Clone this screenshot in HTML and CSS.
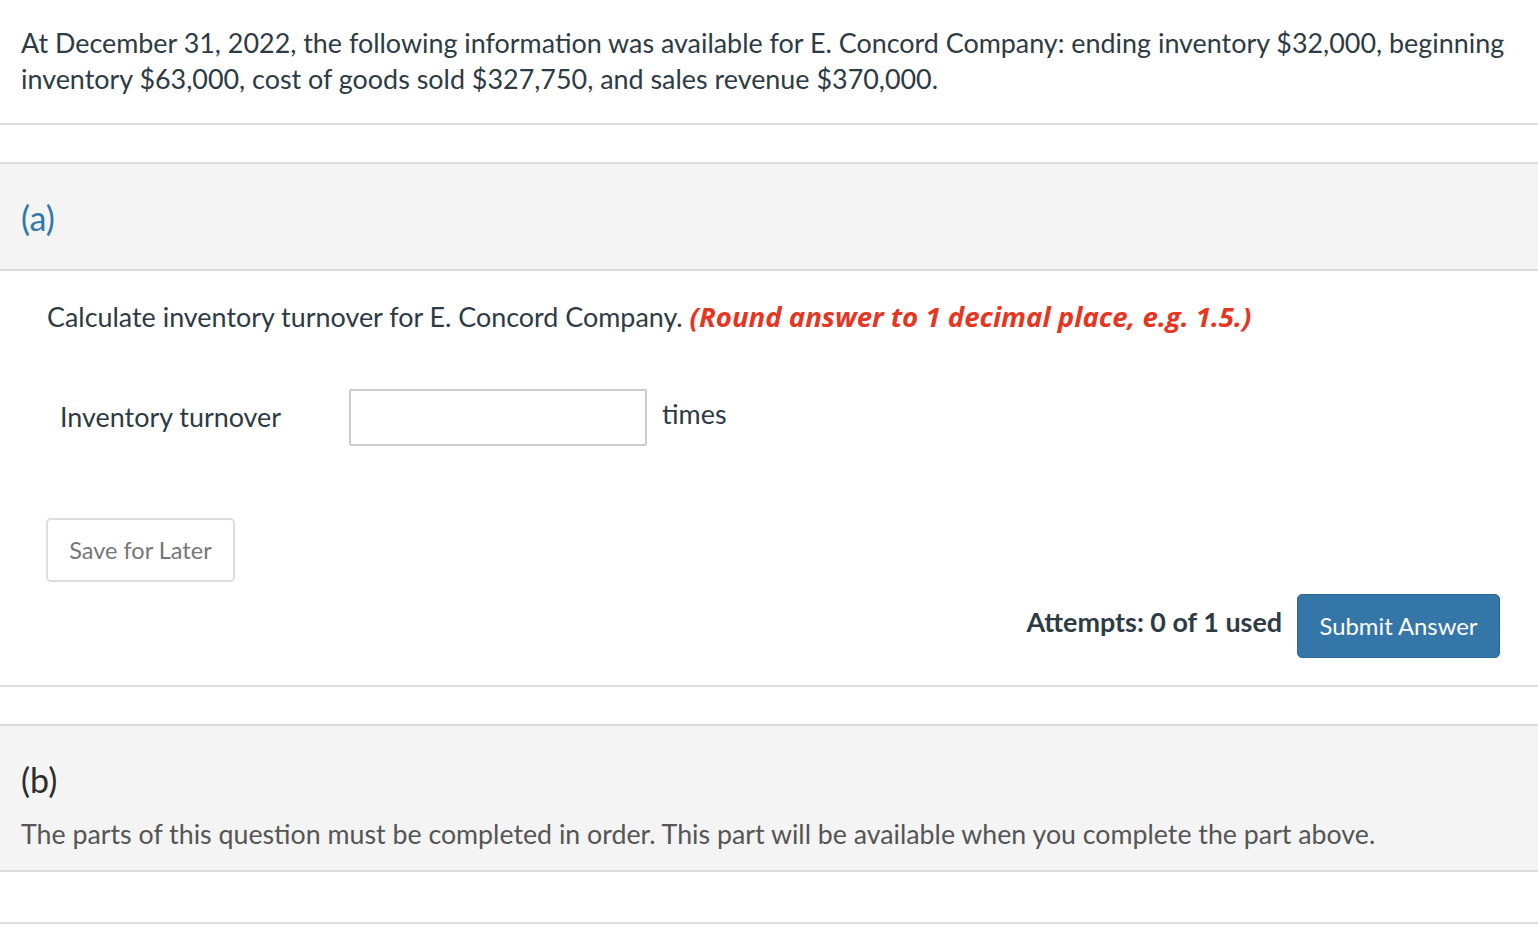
FILE: index.html
```html
<!DOCTYPE html>
<html lang="en">
<head>
<meta charset="utf-8">
<title>Inventory turnover</title>
<link rel="stylesheet" href="styles.css">
</head>
<body>
<div class="intro">
  <p>At December 31, 2022, the following information was available for E. Concord Company: ending inventory $32,000, beginning inventory $63,000, cost of goods sold $327,750, and sales revenue $370,000.</p>
</div>
<div class="gap"></div>
<div class="part-head">
  <span class="part-label active">(a)</span>
</div>
<div class="part-body">
  <p class="question">Calculate inventory turnover for E. Concord Company. <em class="hint">(Round answer to 1 decimal place, e.g. 1.5.)</em></p>
  <div class="answer-row">
    <label class="answer-label" for="turnover">Inventory turnover</label>
    <input class="answer-input" id="turnover" type="text">
    <span class="unit">times</span>
  </div>
  <button class="btn-save" type="button">Save for Later</button>
  <div class="submit-row">
    <span class="attempts">Attempts: 0 of 1 used</span>
    <button class="btn-submit" type="button">Submit Answer</button>
  </div>
</div>
<div class="gap"></div>
<div class="part-head locked">
  <span class="part-label">(b)</span>
  <p class="locked-note">The parts of this question must be completed in order. This part will be available when you complete the part above.</p>
</div>
<div class="gap gap-bottom"></div>
</body>
</html>
```
FILE: styles.css
```css
html, body {
  margin: 0;
  padding: 0;
  background: #ffffff;
}
body {
  font-family: Lato, "Open Sans", "Liberation Sans", sans-serif;
  color: #2d3b45;
  font-size: 26.9px;
  line-height: 36px;
}
p { margin: 0; }

.intro {
  padding: 25px 20px 26px 21px;
  border-bottom: 2px solid #dddddd;
}

.gap {
  height: 37px;
  border-bottom: 2px solid #dddddd;
}
.gap-bottom {
  height: 50px;
}

.part-head {
  background: #f4f4f4;
  padding: 34px 21px 31px;
  border-bottom: 2px solid #dddddd;
}
.part-label {
  display: block;
  font-size: 34px;
  line-height: 40px;
  color: #2d2d2d;
}
.part-label.active {
  color: #2e78ae;
}
.locked {
  padding-top: 34px;
  padding-bottom: 18px;
}
.locked-note {
  margin-top: 16px;
  color: #555555;
  font-size: 26.75px;
}

.part-body {
  padding: 28px 38px 27px 47px;
  border-bottom: 2px solid #dddddd;
}
.question {
  white-space: nowrap;
  height: 36px;
}
.hint {
  font-family: "Open Sans", Lato, sans-serif;
  font-size: 27.6px;
  line-height: 1;
  color: #e8351f;
  font-weight: 700;
  font-style: italic;
}

.answer-row {
  display: flex;
  align-items: flex-start;
  margin-top: 54px;
  padding-left: 13px;
}
.answer-label {
  width: 289px;
  line-height: 56px;
}
.answer-input {
  box-sizing: border-box;
  width: 298px;
  height: 57px;
  border: 2px solid #cccccc;
  border-radius: 2px;
  background: #fff;
  margin: 0;
  font: inherit;
}
.unit {
  margin-left: 15px;
  line-height: 50px;
}

.btn-save {
  display: block;
  margin-top: 72px;
  margin-left: -1px;
  box-sizing: border-box;
  width: 189px;
  height: 64px;
  border: 2px solid #dddddd;
  border-radius: 5px;
  background: #ffffff;
  color: #777777;
  font-family: inherit;
  font-size: 23.5px;
}

.submit-row {
  display: flex;
  justify-content: flex-end;
  align-items: center;
  gap: 15px;
  margin-top: 12px;
}
.attempts {
  font-weight: 700;
  margin-bottom: 9px;
}
.btn-submit {
  box-sizing: border-box;
  width: 203px;
  height: 64px;
  border: 1px solid #2b6797;
  border-radius: 5px;
  background: #3476a8;
  color: #ffffff;
  font-family: inherit;
  font-size: 23.8px;
}
```
